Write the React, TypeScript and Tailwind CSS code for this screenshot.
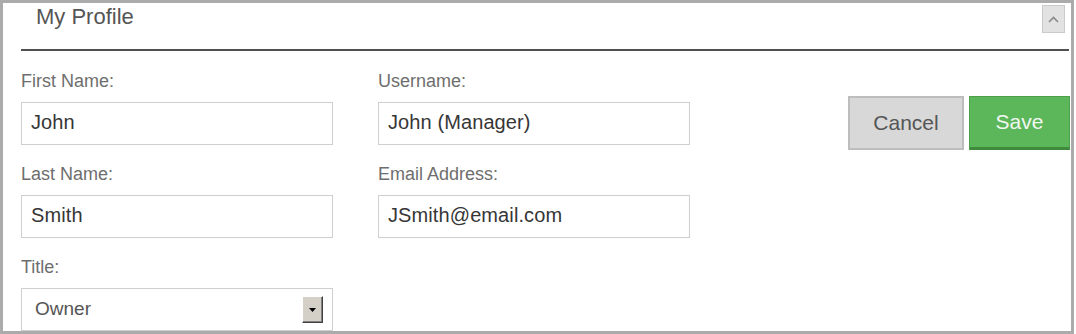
import React from 'react';

function ChevronUp() {
  return (
    <svg width="11" height="7" viewBox="0 0 11 7" fill="none">
      <path d="M1 6l4.5-4.5L10 6" stroke="#8a8a8a" strokeWidth="1.6" />
    </svg>
  );
}

function Field({ label, value, className }: { label: string; value: string; className?: string }) {
  return (
    <div className={className}>
      <div className="h-[20px] text-[18px] leading-[20px] text-[#6e6e6e]">{label}</div>
      <input
        readOnly
        value={value}
        className="mt-[11px] block h-[43px] w-[312px] border border-[#cfcfcf] bg-white px-[9px] pb-[2px] font-['Liberation_Sans',Arial,sans-serif] text-[20px] tracking-[0.1px] text-[#363636] outline-none"
      />
    </div>
  );
}

export default function App() {
  return (
    <div className="h-[334px] w-[1076px] bg-white font-['Liberation_Sans',Arial,sans-serif]">
      <div className="flex h-[334px] w-[1074px] flex-col border-[3px] border-[#ababab] pl-[18px] pr-[1px]">
        {/* Header */}
        <div className="flex h-[46px] items-start justify-between">
          <h2 className="pl-[15px] pt-[1px] text-[22px] leading-[26px] text-[#555]">My Profile</h2>
          <button className="mr-[5px] mt-[2px] flex h-[28px] w-[23px] items-center justify-center border border-[#cacaca] bg-[#e2e2e2]">
            <ChevronUp />
          </button>
        </div>
        <div className="mr-[1px] h-[2px] bg-[#505050]" />

        {/* Form */}
        <div className="flex pt-[20px]">
          <div className="w-[312px]">
            <Field label="First Name:" value="John" />
            <Field label="Last Name:" value="Smith" className="mt-[19px]" />
            <div className="mt-[19px]">
              <div className="h-[20px] text-[18px] leading-[20px] text-[#6e6e6e]">Title:</div>
              <div className="mt-[11px] flex h-[43px] w-[312px] items-center justify-between border border-[#cfcfcf] bg-white pl-[13px] pr-[9px]">
                <span className="text-[19px] text-[#555]">Owner</span>
                <div className="flex h-[27px] w-[21px] items-center justify-center border border-b-[#404040] border-l-white border-r-[#404040] border-t-white bg-[#d4d0c8] shadow-[inset_-1px_-1px_0_#808080]">
                  <svg width="7" height="4" viewBox="0 0 7 4">
                    <path d="M0 0h7L3.5 4z" fill="#000" />
                  </svg>
                </div>
              </div>
            </div>
          </div>

          <div className="ml-[45px] w-[312px]">
            <Field label="Username:" value="John (Manager)" />
            <Field label="Email Address:" value="JSmith@email.com" className="mt-[19px]" />
          </div>

          <div className="ml-auto mt-[25px] flex gap-[5px] self-start">
            <button className="h-[54px] w-[116px] border-2 border-[#bdbdbd] bg-[#d8d8d8] text-[21px] text-[#555]">
              Cancel
            </button>
            <button className="h-[54px] w-[101px] border border-b-[3px] border-[#4f9e4b] border-b-[#3f8a3c] bg-[#5cb65a] text-[21px] text-[#f2f7f2]">
              Save
            </button>
          </div>
        </div>
      </div>
    </div>
  );
}
